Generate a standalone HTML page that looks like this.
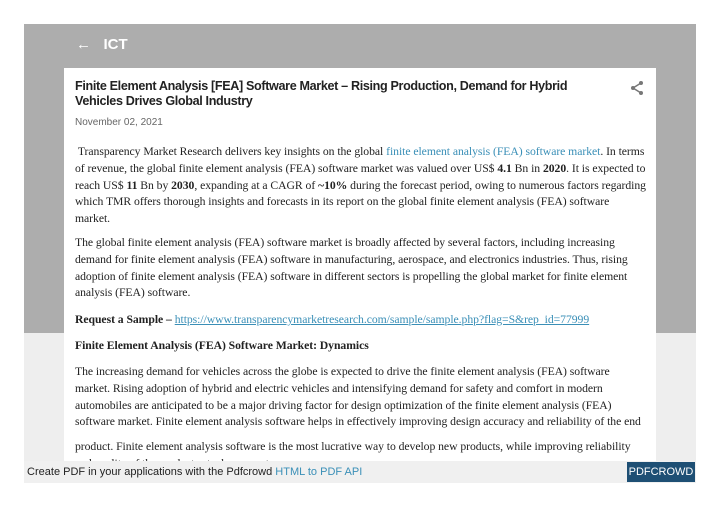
<!DOCTYPE html>
<html><head><style>
body{margin:0;width:720px;height:509px;background:#fff;position:relative;overflow:hidden;font-family:"Liberation Serif",serif}
.top{position:absolute;left:24px;top:24px;width:672px;height:309px;background:#adadad}
.low{position:absolute;left:24px;top:333px;width:672px;height:128px;background:#eeeeee}
.hdr{position:absolute;left:76px;top:36px;color:#fff;font:bold 15px "Liberation Sans",sans-serif}
.card{position:absolute;left:64px;top:68px;width:592px;height:393px;background:#fff;overflow:hidden}
.t{position:absolute;left:11px;top:11px;width:540px;font:bold 12.6px/15px "Liberation Sans",sans-serif;letter-spacing:-0.35px;color:#222}
.d{position:absolute;left:11px;top:49px;font:10px "Liberation Sans",sans-serif;color:#666}
.b{position:absolute;left:11px;width:575px;font-size:11.7px;line-height:16.8px;color:#222;letter-spacing:-0.05px}
.b p{margin:0}
a{color:#3a8fb7;text-decoration:none}
.foot{position:absolute;left:24px;top:461px;width:672px;height:22px;background:#f0f0f0;font:11px/22px "Liberation Sans",sans-serif;color:#222}
.btn{position:absolute;right:1px;top:1px;height:20px;width:68px;background:#1e4f74;color:#fff;font:11px/20px "Liberation Sans",sans-serif;text-align:center}
</style></head><body>
<div class="top"></div><div class="low"></div>
<div class="hdr">&#8592;&nbsp;&nbsp;&nbsp;ICT</div>
<div class="card">
<div class="t">Finite Element Analysis [FEA] Software Market – Rising Production, Demand for Hybrid<br>Vehicles Drives Global Industry</div>
<svg style="position:absolute;left:566px;top:12px" width="14" height="16" viewBox="0 0 14 16"><path d="M11 3L3 8L11 13" stroke="#777" stroke-width="1.5" fill="none"/><circle cx="11" cy="3" r="2" fill="#777"/><circle cx="3" cy="8" r="2" fill="#777"/><circle cx="11" cy="13" r="2" fill="#777"/></svg>
<div class="d">November 02, 2021</div>
<div class="b" style="top:76px"><p>&nbsp;Transparency Market Research delivers key insights on the global <a>finite element analysis (FEA) software market</a>. In terms<br>of revenue, the global finite element analysis (FEA) software market was valued over US$ <b>4.1</b> Bn in <b>2020</b>. It is expected to<br>reach US$ <b>11</b> Bn by <b>2030</b>, expanding at a CAGR of <b>~10%</b> during the forecast period, owing to numerous factors regarding<br>which TMR offers thorough insights and forecasts in its report on the global finite element analysis (FEA) software<br>market.</p></div>
<div class="b" style="top:167px"><p>The global finite element analysis (FEA) software market is broadly affected by several factors, including increasing<br>demand for finite element analysis (FEA) software in manufacturing, aerospace, and electronics industries. Thus, rising<br>adoption of finite element analysis (FEA) software in different sectors is propelling the global market for finite element<br>analysis (FEA) software.</p></div>
<div class="b" style="top:244px"><b>Request a Sample –</b> <a style="text-decoration:underline">https://www.transparencymarketresearch.com/sample/sample.php?flag=S&amp;rep_id=77999</a></div>
<div class="b" style="top:270px"><b>Finite Element Analysis (FEA) Software Market: Dynamics</b></div>
<div class="b" style="top:296px"><p>The increasing demand for vehicles across the globe is expected to drive the finite element analysis (FEA) software<br>market. Rising adoption of hybrid and electric vehicles and intensifying demand for safety and comfort in modern<br>automobiles are anticipated to be a major driving factor for design optimization of the finite element analysis (FEA)<br>software market. Finite element analysis software helps in effectively improving design accuracy and reliability of the end</p></div>
<div class="b" style="top:371px">product. Finite element analysis software is the most lucrative way to develop new products, while improving reliability<br>and quality of the products at a lower cost</div>
</div>
<div class="foot">&nbsp;Create PDF in your applications with the Pdfcrowd <a>HTML to PDF API</a><div class="btn">PDFCROWD</div></div>
</body></html>
